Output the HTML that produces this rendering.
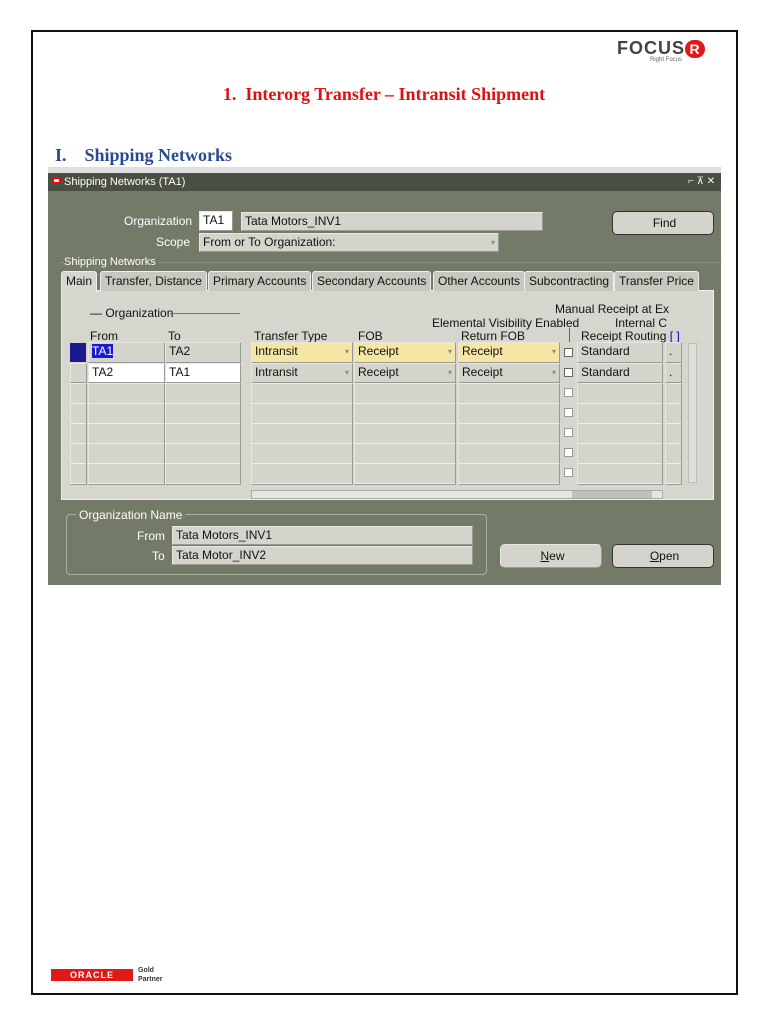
<!DOCTYPE html><html><head><style>
*{margin:0;padding:0;box-sizing:border-box}
body{width:768px;height:1024px;background:#fff;position:relative;font-family:"Liberation Sans",Arial,sans-serif;overflow:hidden}
.a{position:absolute}
.f{position:absolute;background:#d4d4cc;border:1px solid #e8e8e0;border-right-color:#9a9a92;border-bottom-color:#9a9a92;font-size:12px;color:#111;padding-left:3px;line-height:17px;white-space:nowrap;overflow:hidden}
.l{position:absolute;font-size:12px;color:#fff;white-space:nowrap}
.h{position:absolute;font-size:12px;color:#111;white-space:nowrap}
.t{position:absolute;top:271px;height:20px;background:#c8c8c0;border:1px solid #eee;border-bottom:none;font-size:12px;line-height:19px;padding:0 4px;color:#111;border-radius:3px 3px 0 0}
.y{background:#f6e6a4}
.w{background:#fff}
.dd::after{content:"▾";position:absolute;right:3px;top:0;font-size:8px;color:#888}
.cb{position:absolute;width:9px;height:9px;border:1px solid #666;background:#fff}
</style></head><body>
<div class="a" style="left:31px;top:30px;width:707px;height:965px;border:2px solid #111"></div>
<div class="a" style="left:617px;top:38px;font-size:18px;font-weight:bold;color:#444;letter-spacing:1px">FOCUS<span style="display:inline-block;width:20px;height:18px;border-radius:9px;background:#e01818;color:#fff;text-align:center;font-size:14px;line-height:18px">R</span></div>
<div class="a" style="left:650px;top:57px;font-size:6px;color:#666">Right Focus</div>
<div class="a" style="left:0;width:768px;top:84px;text-align:center;font-family:'Liberation Serif',serif;font-weight:bold;font-size:18px;color:#e01010">1.&nbsp; Interorg Transfer – Intransit Shipment</div>
<div class="a" style="left:55px;top:145px;font-family:'Liberation Serif',serif;font-weight:bold;font-size:18px;color:#2a4a8e">I.&nbsp;&nbsp;&nbsp; Shipping Networks</div>
<div class="a" style="left:48px;top:167px;width:673px;height:418px;background:#737a68;border-top:6px solid #dedede"></div>
<div class="a" style="left:48px;top:173px;width:673px;height:18px;background:#4a4f44"></div>
<div class="a" style="left:52px;top:177px;width:9px;height:7px;border:2px solid #f00;border-radius:3px;background:#fff"></div>
<div class="l" style="left:64px;top:176px;font-size:11px">Shipping Networks (TA1)</div>
<div class="l" style="left:688px;top:176px;font-size:10px">⌐ ⊼ ✕</div>
<div class="l" style="left:124px;top:214px">Organization</div>
<div class="f w" style="left:199px;top:211px;width:34px;height:20px">TA1</div>
<div class="f" style="left:241px;top:212px;width:302px;height:19px">Tata Motors_INV1</div>
<div class="l" style="left:156px;top:235px">Scope</div>
<div class="f dd" style="left:199px;top:233px;width:300px;height:19px">From or To Organization:</div>
<div class="f" style="left:612px;top:211px;width:102px;height:24px;text-align:center;line-height:22px;border:1px solid #333;border-radius:5px">Find</div>
<div class="a" style="left:60px;top:262px;width:661px;border-top:1px solid #8a9080"></div>
<div class="l" style="left:64px;top:256px;font-size:11px;background:#737a68;padding-right:3px">Shipping Networks</div>
<div class="a" style="left:61px;top:290px;width:653px;height:210px;background:#d6d6ce;border:1px solid #eee"></div>
<div class="t" style="left:61px;background:#d6d6ce;height:22px">Main</div>
<div class="t" style="left:100px">Transfer, Distance</div>
<div class="t" style="left:208px">Primary Accounts</div>
<div class="t" style="left:312px">Secondary Accounts</div>
<div class="t" style="left:433px">Other Accounts</div>
<div class="t" style="left:524px">Subcontracting</div>
<div class="t" style="left:614px">Transfer Price</div>
<div class="h" style="left:90px;top:306px">— Organization</div>
<div class="a" style="left:170px;top:313px;width:70px;border-top:1px solid #777"></div>
<div class="h" style="left:555px;top:302px">Manual Receipt at Ex</div>
<div class="h" style="left:432px;top:316px">Elemental Visibility Enabled</div>
<div class="h" style="left:615px;top:316px">Internal C</div>
<div class="h" style="left:90px;top:329px">From</div>
<div class="h" style="left:168px;top:329px">To</div>
<div class="h" style="left:254px;top:329px">Transfer Type</div>
<div class="h" style="left:358px;top:329px">FOB</div>
<div class="h" style="left:461px;top:329px">Return FOB</div>
<div class="h" style="left:581px;top:329px">Receipt Routing <span style="color:#00c">[ ]</span></div>
<div class="a" style="left:569px;top:328px;height:14px;border-left:1px solid #666"></div>
<div class="a" style="left:70px;top:343px;width:16px;height:19px;background:#1a1a8c"></div>
<div class="f" style="left:88px;top:342px;width:77px;height:21px"><span style="background:#1a1ad0;color:#fff">TA1</span></div>
<div class="f" style="left:165px;top:342px;width:76px;height:21px">TA2</div>
<div class="f y dd" style="left:251px;top:342px;width:102px;height:21px">Intransit</div>
<div class="f y dd" style="left:354px;top:342px;width:102px;height:21px">Receipt</div>
<div class="f y dd" style="left:458px;top:342px;width:102px;height:21px">Receipt</div>
<div class="cb" style="left:564px;top:348px"></div>
<div class="f" style="left:577px;top:342px;width:86px;height:21px">Standard</div>
<div class="f" style="left:665px;top:342px;width:17px;height:21px">.</div>
<div class="f" style="left:70px;top:363px;width:17px;height:20px"></div>
<div class="f w" style="left:88px;top:363px;width:77px;height:20px">TA2</div>
<div class="f w" style="left:165px;top:363px;width:76px;height:20px">TA1</div>
<div class="f dd" style="left:251px;top:363px;width:102px;height:20px">Intransit</div>
<div class="f dd" style="left:354px;top:363px;width:102px;height:20px">Receipt</div>
<div class="f dd" style="left:458px;top:363px;width:102px;height:20px">Receipt</div>
<div class="cb" style="left:564px;top:368px"></div>
<div class="f" style="left:577px;top:363px;width:86px;height:20px">Standard</div>
<div class="f" style="left:665px;top:363px;width:17px;height:20px">.</div>
<div class="a" id="rows" style="left:0;top:0"></div>
<!-- empty rows -->
<div class="f" style="left:70px;top:383px;width:17px;height:102px;background:repeating-linear-gradient(#d4d4cc 0 19px,#eee 19px 20px)"></div>
<div class="f" style="left:88px;top:383px;width:77px;height:102px;background:repeating-linear-gradient(#d4d4cc 0 19px,#eee 19px 20px)"></div>
<div class="f" style="left:165px;top:383px;width:76px;height:102px;background:repeating-linear-gradient(#d4d4cc 0 19px,#eee 19px 20px)"></div>
<div class="f" style="left:251px;top:383px;width:102px;height:102px;background:repeating-linear-gradient(#d4d4cc 0 19px,#eee 19px 20px)"></div>
<div class="f" style="left:354px;top:383px;width:102px;height:102px;background:repeating-linear-gradient(#d4d4cc 0 19px,#eee 19px 20px)"></div>
<div class="f" style="left:458px;top:383px;width:102px;height:102px;background:repeating-linear-gradient(#d4d4cc 0 19px,#eee 19px 20px)"></div>
<div class="f" style="left:577px;top:383px;width:86px;height:102px;background:repeating-linear-gradient(#d4d4cc 0 19px,#eee 19px 20px)"></div>
<div class="f" style="left:665px;top:383px;width:17px;height:102px;background:repeating-linear-gradient(#d4d4cc 0 19px,#eee 19px 20px)"></div>
<div class="cb" style="left:564px;top:388px;border-color:#999"></div>
<div class="cb" style="left:564px;top:408px;border-color:#999"></div>
<div class="cb" style="left:564px;top:428px;border-color:#999"></div>
<div class="cb" style="left:564px;top:448px;border-color:#999"></div>
<div class="cb" style="left:564px;top:468px;border-color:#999"></div>
<div class="a" style="left:688px;top:343px;width:9px;height:140px;background:#e0e0d8;border:1px solid #bbb"></div>
<div class="a" style="left:251px;top:490px;width:412px;height:9px;background:#e6e6e0;border:1px solid #aaa"></div>
<div class="a" style="left:572px;top:491px;width:80px;height:7px;background:#c0c0b8"></div>
<div class="a" style="left:66px;top:514px;width:421px;height:61px;border:1px solid #aab0a0;border-radius:4px"></div>
<div class="l" style="left:76px;top:508px;background:#737a68;padding:0 3px">Organization Name</div>
<div class="l" style="left:137px;top:529px">From</div>
<div class="f" style="left:172px;top:526px;width:301px;height:19px">Tata Motors_INV1</div>
<div class="l" style="left:152px;top:549px">To</div>
<div class="f" style="left:172px;top:546px;width:301px;height:19px">Tata Motor_INV2</div>
<div class="f" style="left:500px;top:544px;width:102px;height:24px;text-align:center;line-height:22px;border-radius:5px"><u>N</u>ew</div>
<div class="f" style="left:612px;top:544px;width:102px;height:24px;text-align:center;line-height:22px;border:1px solid #333;border-radius:5px"><u>O</u>pen</div>
<div class="a" style="left:51px;top:969px;width:82px;height:12px;background:#e01818;color:#fff;font-size:9px;font-weight:bold;line-height:12px;text-align:center;letter-spacing:1px">ORACLE</div>
<div class="a" style="left:138px;top:966px;font-size:7px;font-weight:bold;color:#333;line-height:9px">Gold<br>Partner</div>
</body></html>
